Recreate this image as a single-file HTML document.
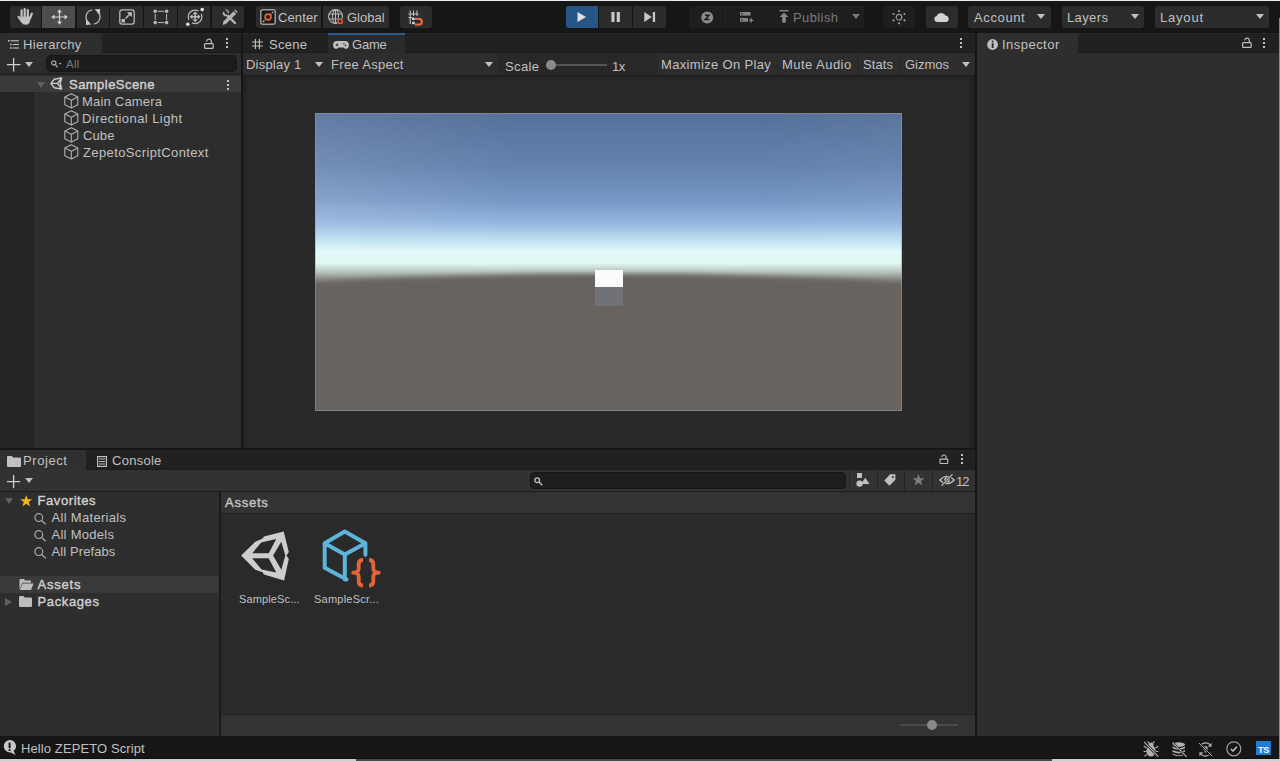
<!DOCTYPE html>
<html><head><meta charset="utf-8">
<style>
*{box-sizing:border-box;margin:0;padding:0}
html,body{width:1280px;height:761px;overflow:hidden;background:#161616;font-family:"Liberation Sans",sans-serif;color:#c0c0c0;font-size:13px}
.a{position:absolute}
.b{position:absolute;background:#2c2c2c;top:6px;height:22px}
.t{position:absolute;white-space:nowrap;line-height:1;font-size:13px}
.bd{font-weight:bold}
.sb{-webkit-text-stroke:0.4px currentColor}
svg{position:absolute;overflow:visible}
.dd{position:absolute;width:0;height:0;border-left:4px solid transparent;border-right:4px solid transparent;border-top:5px solid #c0c0c0}
.kb{position:absolute;width:2px;height:10px;background:radial-gradient(circle at 1px 1px,#c0c0c0 1px,transparent 1.2px) 0 0/2px 4px repeat-y}
</style></head><body>

<!-- ============ MAIN TOOLBAR ============ -->
<div class="a" style="left:0;top:0;width:1280px;height:1px;background:#ececec"></div>

<div class="b" style="left:10px;width:31px;border-radius:3px 0 0 3px"></div>
<div class="b" style="left:42px;width:33px;background:#4d4d4d"></div>
<div class="b" style="left:77px;width:32px"></div>
<div class="b" style="left:110px;width:33px"></div>
<div class="b" style="left:144px;width:33px"></div>
<div class="b" style="left:178px;width:32px"></div>
<div class="b" style="left:212px;width:32px;border-radius:0 3px 3px 0"></div>

<div class="b" style="left:256px;width:65px;border-radius:3px 0 0 3px"></div>
<div class="b" style="left:323px;width:66px;border-radius:0 3px 3px 0"></div>
<div class="t" style="left:278px;top:11px;letter-spacing:0.12px">Center</div>
<div class="t" style="left:347px;top:11px">Global</div>
<div class="b" style="left:400px;width:32px;border-radius:3px"></div>

<div class="b" style="left:566px;width:32px;background:#265586;border-radius:3px 0 0 3px"></div>
<div class="b" style="left:599px;width:33px"></div>
<div class="b" style="left:633px;width:33px;border-radius:0 3px 3px 0"></div>

<div class="b" style="left:689px;width:175px;background:#1e1e1e;border-radius:3px"></div>
<div class="a" style="left:725px;top:9px;width:1px;height:16px;background:#252525"></div>
<div class="t" style="left:793px;top:11px;letter-spacing:0.4px;color:#7a7a7a">Publish</div>
<div class="dd" style="left:852px;top:14px;border-top-color:#7a7a7a"></div>

<div class="b" style="left:883px;width:32px;background:#1e1e1e;border-radius:3px"></div>
<div class="b" style="left:926px;width:32px;border-radius:3px"></div>

<div class="b" style="left:968px;width:83px;border-radius:3px"></div>
<div class="t" style="left:974px;top:11px;letter-spacing:0.62px">Account</div>
<div class="dd" style="left:1037px;top:14px"></div>
<div class="b" style="left:1062px;width:82px;border-radius:3px"></div>
<div class="t" style="left:1067px;top:11px;letter-spacing:0.38px">Layers</div>
<div class="dd" style="left:1131px;top:14px"></div>
<div class="b" style="left:1155px;width:114px;border-radius:3px"></div>
<div class="t" style="left:1160px;top:11px;letter-spacing:0.8px">Layout</div>
<div class="dd" style="left:1256px;top:14px"></div>
<div class="a" style="left:1279px;top:18px;width:1px;height:743px;background:#8a8a8a"></div>

<!-- ============ HIERARCHY ============ -->
<div class="a" style="left:0;top:33px;width:241px;height:20px;background:#212121;border-top:1px solid #272727;border-bottom:1px solid #1b1b1b"></div>
<div class="a" style="left:0;top:33px;width:102px;height:20px;background:#2d2d2d;border-radius:3px 3px 0 0"></div>
<div class="t" style="left:23px;top:38px;letter-spacing:0.33px">Hierarchy</div>
<div class="a" style="left:0;top:53px;width:241px;height:395px;background:#2d2d2d"></div>
<div class="a" style="left:46px;top:55px;width:191px;height:17px;background:#1c1c1c;border-radius:5px;border:1px solid #161616"></div>
<div class="t" style="left:66px;top:58.5px;font-size:11.5px;color:#7a7a7a;letter-spacing:0.24px">All</div>
<div class="a" style="left:0;top:73px;width:241px;height:2px;background:#212121"></div>
<div class="a" style="left:0;top:76px;width:241px;height:16px;background:#3a3a3a"></div>
<div class="a" style="left:0;top:92px;width:34px;height:356px;background:#242424;border-right:1px solid #202020"></div>
<div class="t sb" style="left:69px;top:77.5px;letter-spacing:0.46px;color:#d0d0d0">SampleScene</div>
<div class="t" style="left:82px;top:94.5px;letter-spacing:0.2px">Main Camera</div>
<div class="t" style="left:82px;top:111.5px;letter-spacing:0.43px">Directional Light</div>
<div class="t" style="left:83px;top:128.5px;letter-spacing:0.12px">Cube</div>
<div class="t" style="left:83px;top:145.5px;letter-spacing:0.38px">ZepetoScriptContext</div>

<!-- ============ SCENE / GAME ============ -->
<div class="a" style="left:243px;top:33px;width:732px;height:20px;background:#212121;border-top:1px solid #272727;border-bottom:1px solid #1b1b1b"></div>
<div class="a" style="left:328px;top:33px;width:77px;height:20px;background:#2b2b2b;border-radius:3px 3px 0 0"></div>
<div class="a" style="left:328px;top:33px;width:77px;height:2px;background:#2b5b8c"></div>
<div class="t" style="left:269px;top:37.5px;letter-spacing:0.29px">Scene</div>
<div class="t" style="left:352px;top:37.5px;letter-spacing:-0.22px">Game</div>
<div class="a" style="left:243px;top:53px;width:732px;height:22px;background:#282828"></div>
<div class="a" style="left:243px;top:53px;width:84px;height:22px;background:#2d2d2d"></div>
<div class="a" style="left:328px;top:53px;width:170px;height:22px;background:#2d2d2d"></div>
<div class="a" style="left:658px;top:53px;width:119px;height:22px;background:#2d2d2d"></div>
<div class="a" style="left:778px;top:53px;width:79px;height:22px;background:#2d2d2d"></div>
<div class="a" style="left:859px;top:53px;width:40px;height:22px;background:#2d2d2d"></div>
<div class="a" style="left:900px;top:53px;width:74px;height:22px;background:#2d2d2d"></div>
<div class="t" style="left:246px;top:58px;letter-spacing:0.21px">Display 1</div>
<div class="dd" style="left:315px;top:62px"></div>
<div class="t" style="left:331px;top:58px;letter-spacing:0.31px">Free Aspect</div>
<div class="dd" style="left:485px;top:62px"></div>
<div class="t" style="left:505px;top:59.5px;letter-spacing:0.38px">Scale</div>
<div class="a" style="left:551px;top:64px;width:56px;height:2px;background:#555"></div>
<div class="a" style="left:546px;top:60px;width:10px;height:10px;border-radius:50%;background:#8a8a8a"></div>
<div class="t" style="left:612px;top:59.5px;letter-spacing:-0.5px">1x</div>
<div class="t" style="left:661px;top:58px;letter-spacing:0.33px">Maximize On Play</div>
<div class="t" style="left:782px;top:58px;letter-spacing:0.46px">Mute Audio</div>
<div class="t" style="left:863px;top:58px;letter-spacing:0.12px">Stats</div>
<div class="t" style="left:905px;top:58px">Gizmos</div>
<div class="dd" style="left:962px;top:62px"></div>
<div class="a" style="left:243px;top:75px;width:732px;height:373px;background:#292929;border-top:1px solid #1e1e1e"></div>
<div class="a" style="left:243px;top:76px;width:732px;height:4px;background:linear-gradient(#222,#292929)"></div>
<div class="a" style="left:243px;top:75px;width:5px;height:373px;background:linear-gradient(90deg,#1f1f1f,rgba(41,41,41,0))"></div>
<div class="a" style="left:968px;top:75px;width:7px;height:373px;background:linear-gradient(90deg,rgba(41,41,41,0),#1c1c1c)"></div>

<!-- game view -->
<svg style="left:315px;top:113px;overflow:hidden" width="587" height="298" viewBox="0 0 587 298">
  <defs>
    <linearGradient id="sky" x1="0" y1="0" x2="0" y2="298" gradientUnits="userSpaceOnUse">
      <stop offset="0" stop-color="#55709a"/>
      <stop offset="0.178" stop-color="#6482ae"/>
      <stop offset="0.292" stop-color="#7697c5"/>
      <stop offset="0.369" stop-color="#94b6df"/>
      <stop offset="0.423" stop-color="#bddff0"/>
      <stop offset="0.465" stop-color="#e2fafa"/>
      <stop offset="0.505" stop-color="#e0f6f2"/>
      <stop offset="0.53" stop-color="#bccac5"/>
      <stop offset="0.555" stop-color="#8f928e"/>
      <stop offset="0.6" stop-color="#6a645f"/>
      <stop offset="1" stop-color="#67605b"/>
    </linearGradient>
    <linearGradient id="hl" x1="0" y1="0" x2="587" y2="0" gradientUnits="userSpaceOnUse">
      <stop offset="0" stop-color="#fff" stop-opacity="0.13"/>
      <stop offset="0.35" stop-color="#fff" stop-opacity="0"/>
      <stop offset="0.75" stop-color="#fff" stop-opacity="0"/>
      <stop offset="1" stop-color="#fff" stop-opacity="0.05"/>
    </linearGradient>
    <linearGradient id="vm" x1="0" y1="0" x2="0" y2="160" gradientUnits="userSpaceOnUse">
      <stop offset="0" stop-color="#fff" stop-opacity="0.6"/>
      <stop offset="0.6" stop-color="#fff" stop-opacity="1"/>
      <stop offset="1" stop-color="#fff" stop-opacity="0"/>
    </linearGradient>
    <mask id="m1"><rect width="587" height="160" fill="url(#vm)"/></mask>
    <filter id="bl" x="-5%" y="-20%" width="110%" height="140%"><feGaussianBlur stdDeviation="2.4"/></filter>
    <filter id="bl2"><feGaussianBlur stdDeviation="0.6"/></filter>
  </defs>
  <rect width="587" height="298" fill="url(#sky)"/>
  <rect width="587" height="160" fill="url(#hl)" mask="url(#m1)"/>
  <path d="M-20 170 Q293 152 607 170 L607 320 L-20 320 Z" fill="#69635e" filter="url(#bl)"/>
  <g filter="url(#bl2)">
  <rect x="280" y="157" width="28" height="17" fill="#fbfbfb"/>
  <rect x="280" y="174" width="28" height="19" fill="#6f7278"/>
  </g>
  <rect x="0.5" y="0.5" width="586" height="297" fill="none" stroke="#9aa0a8" stroke-opacity="0.5"/>
</svg>

<!-- ============ INSPECTOR ============ -->
<div class="a" style="left:977px;top:33px;width:302px;height:20px;background:#212121;border-top:1px solid #272727;border-bottom:1px solid #1b1b1b"></div>
<div class="a" style="left:977px;top:33px;width:101px;height:20px;background:#2e2e2e;border-radius:3px 3px 0 0"></div>
<div class="t" style="left:1002px;top:37.5px;letter-spacing:0.47px">Inspector</div>
<div class="a" style="left:977px;top:53px;width:302px;height:683px;background:#2e2e2e"></div>

<!-- ============ PROJECT ============ -->
<div class="a" style="left:0;top:450px;width:975px;height:20px;background:#212121;border-top:1px solid #272727;border-bottom:1px solid #1b1b1b"></div>
<div class="a" style="left:0;top:450px;width:86px;height:20px;background:#303030;border-radius:3px 3px 0 0"></div>
<div class="t" style="left:23px;top:453.7px;letter-spacing:0.58px">Project</div>
<div class="t" style="left:112px;top:453.7px;letter-spacing:0.26px">Console</div>
<div class="a" style="left:0;top:470px;width:975px;height:21px;background:#323232"></div>
<div class="a" style="left:530px;top:472px;width:316px;height:17px;background:#1e1e1e;border-radius:4px;border:1px solid #161616"></div>
<div class="a" style="left:849px;top:470px;width:1px;height:21px;background:#252525"></div>
<div class="a" style="left:877px;top:470px;width:1px;height:21px;background:#252525"></div>
<div class="a" style="left:904px;top:470px;width:1px;height:21px;background:#252525"></div>
<div class="a" style="left:932px;top:470px;width:1px;height:21px;background:#252525"></div>
<div class="t" style="left:956px;top:474.5px;letter-spacing:-1px">12</div>
<div class="a" style="left:0;top:491px;width:975px;height:1px;background:#1c1c1c"></div>
<div class="a" style="left:0;top:492px;width:219px;height:244px;background:#2e2e2e"></div>
<div class="a" style="left:219px;top:492px;width:2px;height:244px;background:#1c1c1c;border-left:1px solid #181818"></div>
<div class="a" style="left:221px;top:492px;width:754px;height:244px;background:#2a2a2a"></div>
<div class="t sb" style="left:37.5px;top:494px;letter-spacing:0.58px;color:#d0d0d0">Favorites</div>
<div class="t" style="left:51.5px;top:510.7px;letter-spacing:0.31px">All Materials</div>
<div class="t" style="left:51.5px;top:527.7px;letter-spacing:0.27px">All Models</div>
<div class="t" style="left:51.5px;top:544.6px;letter-spacing:0.1px">All Prefabs</div>
<div class="a" style="left:0;top:576px;width:219px;height:17px;background:#3a3a3a"></div>
<div class="t sb" style="left:37.5px;top:577.5px;letter-spacing:0.78px;color:#d0d0d0">Assets</div>
<div class="t sb" style="left:37.5px;top:594.5px;letter-spacing:0.62px;color:#d0d0d0">Packages</div>
<div class="a" style="left:221px;top:492px;width:754px;height:21px;background:#333333"></div>
<div class="a" style="left:221px;top:513px;width:754px;height:1px;background:#222"></div>
<div class="t sb" style="left:225px;top:496.3px;letter-spacing:0.76px;color:#c4c4c4">Assets</div>
<div class="t" style="left:239px;top:594.4px;font-size:11px;letter-spacing:0.13px">SampleSc...</div>
<div class="t" style="left:314px;top:594.4px;font-size:11px;letter-spacing:0.23px">SampleScr...</div>
<div class="a" style="left:221px;top:714px;width:754px;height:1px;background:#222"></div>
<div class="a" style="left:221px;top:715px;width:754px;height:21px;background:#333333"></div>
<div class="a" style="left:900px;top:724px;width:58px;height:2px;background:#4a4a4a"></div>
<div class="a" style="left:927px;top:720px;width:10px;height:10px;border-radius:50%;background:#8a8a8a"></div>

<!-- ============ STATUS BAR ============ -->
<div class="a" style="left:0;top:736px;width:1279px;height:23px;background:#161616;border-bottom:1px solid #0e0e0e"></div>
<div class="a" style="left:0;top:759px;width:356px;height:2px;background:#cfcfcf"></div>
<div class="a" style="left:356px;top:759px;width:696px;height:2px;background:#4a4a4a"></div>
<div class="a" style="left:1052px;top:759px;width:228px;height:2px;background:#cfcfcf"></div>
<div class="t" style="left:21px;top:742px;letter-spacing:0.1px">Hello ZEPETO Script</div>
<div class="a" style="left:1256px;top:741px;width:15px;height:14px;background:#1f7bd3"></div>
<div class="t bd" style="left:1258px;top:746px;font-size:9px;color:#fff;letter-spacing:-0.2px">TS</div>

<!-- ============ TOOLBAR ICONS ============ -->
<svg style="left:17px;top:8px" width="17" height="17" viewBox="0 0 17 17" fill="#c2c2c2" stroke="#c2c2c2" stroke-linecap="round">
  <path d="M3.6 8.5 L13.8 8.8 L12.6 14.2 Q11.6 16.8 8.6 16.8 Q5.6 16.8 4.6 14.4 Z" stroke="none"/>
  <path d="M4.6 9.5 V2.4 M7.7 9 V1.2 M10.8 9.5 V2 M12.9 10.5 L14.8 5.6" stroke-width="2.2" fill="none"/>
  <path d="M5 13.5 L1.6 8.8" stroke-width="2.2" fill="none"/>
</svg>
<svg style="left:51px;top:9px" width="17" height="16" viewBox="0 0 17 16" fill="#d4d4d4" stroke="#d4d4d4">
  <path d="M8.5 0.3 L11 3.4 H6 Z M8.5 15.7 L11 12.6 H6 Z M0.3 8 L3.4 5.5 V10.5 Z M16.7 8 L13.6 5.5 V10.5 Z" stroke="none"/>
  <path d="M8.5 3 V13 M3 8 H14" stroke-width="1.1" fill="none"/>
</svg>
<svg style="left:85px;top:9px" width="16" height="16" viewBox="0 0 16 16" fill="none" stroke="#c2c2c2" stroke-width="1.2">
  <path d="M7.2 1 A7 7 0 0 0 3.4 13.2"/>
  <path d="M8.8 15 A7 7 0 0 0 12.6 2.8"/>
  <path d="M1.2 10.6 L6.4 15.6 L0.8 16 Z M14.8 5.4 L9.6 0.4 L15.2 0 Z" fill="#c8c8c8" stroke="none"/>
</svg>
<svg style="left:119px;top:9px" width="16" height="16" viewBox="0 0 16 16" fill="none" stroke="#b8b8b8">
  <rect x="0.8" y="0.8" width="14.4" height="14.4" rx="2.4" stroke-width="1.3"/>
  <rect x="2.5" y="10" width="3.5" height="3.5" fill="#b8b8b8" stroke="none"/>
  <path d="M6.5 9.5 L11.5 4.5" stroke-width="1.6"/>
  <path d="M8 3.2 H12.8 V8 Z" fill="#c8c8c8" stroke="none"/>
</svg>
<svg style="left:153px;top:9px" width="16" height="16" viewBox="0 0 16 16" fill="#b8b8b8" stroke="#b8b8b8">
  <circle cx="2.2" cy="2.3" r="1.8" stroke="none"/><circle cx="13.6" cy="2.3" r="1.8" stroke="none"/>
  <circle cx="2.2" cy="13.6" r="1.8" stroke="none"/><circle cx="13.6" cy="13.6" r="1.8" stroke="none"/>
  <path d="M4.8 2.3 H11 M4.8 13.6 H11 M2.2 4.8 V11.1 M13.6 4.8 V11.1" stroke-width="1" fill="none"/>
</svg>
<svg style="left:186px;top:8px" width="18" height="18" viewBox="0 0 18 18" fill="#bdbdbd" stroke="#bdbdbd">
  <circle cx="9.1" cy="8.85" r="6.8" fill="none" stroke-width="1.2" stroke-dasharray="14 4 17.4 4 3.3 0"/>
  <path d="M9.1 3.4 L11.6 6.3 H6.6 Z M9.1 14.3 L11.6 11.4 H6.6 Z M3.6 8.85 L6.5 6.35 V11.35 Z M14.6 8.85 L11.7 6.35 V11.35 Z" stroke="none"/>
  <path d="M9.1 6 V11.7 M6.3 8.85 H11.9" stroke-width="1.5"/>
  <circle cx="16.2" cy="1.6" r="1.8" fill="#e0e0e0" stroke="none"/><circle cx="1.8" cy="16.3" r="1.8" fill="#e0e0e0" stroke="none"/>
</svg>
<svg style="left:222px;top:9px" width="16" height="16" viewBox="0 0 16 16" fill="#b4b4b4" stroke="none">
  <path d="M0.6 16 L1.6 12.2 L11.6 2.2 L14.2 4.8 L4.2 14.8 Z"/>
  <path d="M12.3 1.5 L13.3 0.5 L15.7 2.9 L14.7 3.9 Z"/>
  <path d="M6.2 5.6 L14.6 14 L12.8 15.6 L4.6 7.4 Z"/>
  <path d="M1 2.8 A3.3 3.3 0 0 0 6 6.8 L4.6 5.4 A1.6 1.6 0 0 1 2.6 3.3 Z M3 0.6 A3.3 3.3 0 0 1 7 4.8 L5.5 3.6 A1.6 1.6 0 0 0 4.2 1.8 Z"/>
</svg>
<svg style="left:260px;top:9px" width="16" height="16" viewBox="0 0 16 16">
  <rect x="0.8" y="0.8" width="14.4" height="14.4" rx="2" fill="#1a1a1a" stroke="#9a9a9a" stroke-width="1.5"/>
  <path d="M3 13 L13 3" stroke="#d8d8d8" stroke-width="1.2" stroke-dasharray="2 1.2"/>
  <circle cx="8" cy="8" r="2.9" fill="#2a1a16" stroke="#e3643e" stroke-width="1.7"/>
</svg>
<svg style="left:328px;top:9px" width="16" height="16" viewBox="0 0 16 16" fill="none" stroke="#b8b8b8" stroke-width="1.1">
  <circle cx="7.5" cy="7.5" r="6.9"/>
  <ellipse cx="7.5" cy="7.5" rx="3" ry="6.9"/>
  <path d="M0.8 5 H14.2 M0.8 10 H14.2 M7.5 0.6 V14.4"/>
  <circle cx="12.2" cy="12.4" r="3.2" fill="#191919" stroke="none"/>
  <circle cx="12.2" cy="12.4" r="2.2" fill="#2c2c2c" stroke="#e0603a" stroke-width="1.5"/>
</svg>
<svg style="left:408px;top:10px" width="16" height="15" viewBox="0 0 16 15">
  <path d="M0.5 4 H10.5 M0.5 7.5 H4 M2.2 0.5 V14 M5.5 0.5 V6 M9 0.5 V6" stroke="#c2c2c2" stroke-width="1.1"/>
  <rect x="4.2" y="7.6" width="2.4" height="2.4" fill="#e8e8e8"/><rect x="4.2" y="11.8" width="2.4" height="2.4" fill="#e8e8e8"/>
  <path d="M7 8.8 H11 A2.9 2.9 0 0 1 11 14.6 H7" fill="none" stroke="#e0663c" stroke-width="2.3"/>
</svg>

<svg style="left:577px;top:12px" width="10" height="10" viewBox="0 0 10 10"><path d="M0.5 0 L9 5 L0.5 10 Z" fill="#e2e2e2"/></svg>
<svg style="left:611px;top:12px" width="10" height="10" viewBox="0 0 10 10"><path d="M0.4 0 H3.5 V10 H0.4 Z M5.7 0 H8.9 V10 H5.7 Z" fill="#c8c8c8"/></svg>
<svg style="left:644px;top:12px" width="12" height="10" viewBox="0 0 12 10"><path d="M0.3 0 L7.8 5 L0.3 10 Z M8.8 0 H11.1 V10 H8.8 Z" fill="#c8c8c8"/></svg>

<svg style="left:701px;top:10.5px" width="13" height="13" viewBox="0 0 13 13"><circle cx="6.2" cy="6.4" r="6" fill="#8a8a8a"/><path d="M4 4.3 H8 L4.2 8.5 H8.4" stroke="#1e1e1e" stroke-width="1.5" fill="none"/></svg>
<svg style="left:740px;top:12px" width="14" height="11" viewBox="0 0 14 11" fill="#858585"><rect x="0" y="0" width="10.5" height="3.6"/><rect x="0" y="6" width="8" height="3.8"/><rect x="1.3" y="1.2" width="1.4" height="1.2" fill="#1e1e1e"/><rect x="1.3" y="7.3" width="1.4" height="1.2" fill="#1e1e1e"/><path d="M11.2 6.2 V10.6 M9 8.4 H13.4" stroke="#858585" stroke-width="1.4"/></svg>
<svg style="left:779px;top:10px" width="10" height="13" viewBox="0 0 10 13" fill="#858585"><rect x="0.5" y="0" width="9" height="1.4"/><path d="M5 2.6 L9.5 7 H6.8 V12.8 H3.2 V7 H0.5 Z"/></svg>

<svg style="left:891.5px;top:10px" width="14" height="15" viewBox="0 0 14 15" fill="#9a9a9a"><circle cx="7" cy="7.2" r="2.8" fill="none" stroke="#9a9a9a" stroke-width="1.2"/><circle cx="7" cy="1.1" r="1.1"/><circle cx="7" cy="13.3" r="1.1"/><circle cx="1.5" cy="4" r="1.1"/><circle cx="12.5" cy="4" r="1.1"/><circle cx="1.5" cy="10.4" r="1.1"/><circle cx="12.5" cy="10.4" r="1.1"/></svg>
<svg style="left:934px;top:12px" width="16" height="10" viewBox="0 0 16 10"><path d="M3 10 A3 3 0 0 1 2.6 4.1 A5 5 0 0 1 11.6 3.6 A3.3 3.3 0 0 1 12.5 10 Z" fill="#d2d2d2"/></svg>

<!-- ============ PANEL ICONS ============ -->
<svg style="left:8px;top:39.5px" width="11" height="9" viewBox="0 0 11 9" fill="#bcbcbc"><rect x="0" y="0" width="1.6" height="1.6"/><rect x="2.6" y="0.2" width="8.4" height="1.2"/><rect x="2" y="3.7" width="1.6" height="1.6"/><rect x="4.6" y="3.9" width="6.4" height="1.2"/><rect x="2" y="7.2" width="1.6" height="1.6"/><rect x="4.6" y="7.4" width="6.4" height="1.2"/></svg>
<svg style="left:204px;top:37.5px" width="10" height="11" viewBox="0 0 10 11" fill="none" stroke="#c0c0c0" stroke-width="1.2"><path d="M2.6 3.4 A2.4 2.4 0 0 1 7.3 2.8 V5.4"/><rect x="0.6" y="5.6" width="8.6" height="4.8" rx="0.9"/></svg>
<div class="kb" style="left:226px;top:38px"></div>
<svg style="left:7px;top:58px" width="14" height="14" viewBox="0 0 14 14" stroke="#cfcfcf" stroke-width="1.3"><path d="M6.6 0 V13.4 M0 6.7 H13.4"/></svg>
<div class="dd" style="left:24.5px;top:61.5px"></div>
<svg style="left:50.5px;top:60px" width="11" height="8" viewBox="0 0 11 8" fill="none" stroke="#a8a8a8" stroke-width="1.3"><circle cx="2.8" cy="2.9" r="2.1"/><path d="M4.3 4.5 L6.6 7.3 M8 3.6 H10.2"/></svg>
<div class="dd" style="left:36.5px;top:81.5px;border-top-color:#5f5f5f;border-top-width:6px"></div>
<svg style="left:49.5px;top:77px" width="13" height="13" viewBox="0 0 13 13" fill="none" stroke="#cdcdcd" stroke-width="1.4" stroke-linejoin="round"><path d="M11.6 0.9 L4.3 2.2 L0.9 6.4 L4.3 10.7 L11.6 12.1 L10.2 6.4 Z M0.9 6.4 H7.5 L11.6 0.9 M7.5 6.4 L11.6 12.1"/></svg>
<div class="kb" style="left:227px;top:79.5px"></div>
<svg style="left:64px;top:93px" width="15" height="16" viewBox="0 0 15 16" fill="none" stroke="#b0b0b0" stroke-width="1.1" stroke-linejoin="round"><path d="M7.3 0.8 L13.8 4 V11.8 L7.3 15 L0.8 11.8 V4 Z M0.8 4 L7.3 7.2 L13.8 4 M7.3 7.2 V15"/></svg>
<svg style="left:64px;top:110px" width="15" height="16" viewBox="0 0 15 16" fill="none" stroke="#b0b0b0" stroke-width="1.1" stroke-linejoin="round"><path d="M7.3 0.8 L13.8 4 V11.8 L7.3 15 L0.8 11.8 V4 Z M0.8 4 L7.3 7.2 L13.8 4 M7.3 7.2 V15"/></svg>
<svg style="left:64px;top:127px" width="15" height="16" viewBox="0 0 15 16" fill="none" stroke="#b0b0b0" stroke-width="1.1" stroke-linejoin="round"><path d="M7.3 0.8 L13.8 4 V11.8 L7.3 15 L0.8 11.8 V4 Z M0.8 4 L7.3 7.2 L13.8 4 M7.3 7.2 V15"/></svg>
<svg style="left:64px;top:144px" width="15" height="16" viewBox="0 0 15 16" fill="none" stroke="#b0b0b0" stroke-width="1.1" stroke-linejoin="round"><path d="M7.3 0.8 L13.8 4 V11.8 L7.3 15 L0.8 11.8 V4 Z M0.8 4 L7.3 7.2 L13.8 4 M7.3 7.2 V15"/></svg>

<svg style="left:252px;top:38.5px" width="11" height="10" viewBox="0 0 11 10" stroke="#bcbcbc" stroke-width="1.2"><path d="M3.4 0 V10 M7.4 0 V10 M0 3 H11 M0 7 H11"/></svg>
<svg style="left:333px;top:40.5px" width="16" height="8" viewBox="0 0 16 8"><path d="M4 0 H12 A3.9 3.9 0 0 1 12 7.8 L10.5 6.6 H5.5 L4 7.8 A3.9 3.9 0 0 1 4 0 Z" fill="#c0c0c0"/><path d="M2.6 3.9 H5.4 M4 2.5 V5.3" stroke="#2a2a2a" stroke-width="1"/><circle cx="11" cy="2.8" r="0.8" fill="#2a2a2a"/><circle cx="12.6" cy="4.6" r="0.8" fill="#2a2a2a"/></svg>
<div class="kb" style="left:960px;top:38px"></div>

<svg style="left:987px;top:38.5px" width="12" height="11" viewBox="0 0 12 11"><circle cx="5.6" cy="5.5" r="5.4" fill="#c0c0c0"/><rect x="4.7" y="4.2" width="1.9" height="4.8" fill="#2c2c2c"/><circle cx="5.65" cy="2.6" r="1" fill="#2c2c2c"/></svg>
<svg style="left:1241.5px;top:37px" width="10" height="11" viewBox="0 0 10 11" fill="none" stroke="#c0c0c0" stroke-width="1.2"><path d="M2.6 3.4 A2.4 2.4 0 0 1 7.3 2.8 V5.4"/><rect x="0.6" y="5.6" width="8.6" height="4.8" rx="0.9"/></svg>
<div class="kb" style="left:1263px;top:38px"></div>

<svg style="left:7px;top:455.5px" width="14" height="11" viewBox="0 0 14 11"><path d="M0 1 Q0 0 1 0 H4.8 L6.2 1.6 H13 Q14 1.6 14 2.6 V10.2 Q14 11 13 11 H1 Q0 11 0 10 Z" fill="#c0c0c0"/></svg>
<svg style="left:97px;top:455.5px" width="10" height="11" viewBox="0 0 10 11"><rect x="0.6" y="0.6" width="8.8" height="9.8" fill="none" stroke="#c0c0c0" stroke-width="1.2"/><path d="M2 3 H8 M2 5.5 H8 M2 8 H8" stroke="#c0c0c0" stroke-width="1.2"/></svg>
<svg style="left:939px;top:454px" width="10" height="10" viewBox="0 0 10 11" fill="none" stroke="#c0c0c0" stroke-width="1.2"><path d="M2.6 3.4 A2.4 2.4 0 0 1 7.3 2.8 V5.4"/><rect x="0.6" y="5.6" width="8.6" height="4.8" rx="0.9"/></svg>
<div class="kb" style="left:960.5px;top:454px"></div>
<svg style="left:7px;top:475px" width="14" height="14" viewBox="0 0 14 14" stroke="#cfcfcf" stroke-width="1.3"><path d="M6.6 0 V13.2 M0 6.6 H13.2"/></svg>
<div class="dd" style="left:24.5px;top:478px"></div>
<svg style="left:534px;top:476.5px" width="9" height="9" viewBox="0 0 9 9" fill="none" stroke="#c4c4c4" stroke-width="1.3"><circle cx="3.2" cy="3.2" r="2.4"/><path d="M5 5 L8.2 8.2"/></svg>
<svg style="left:856px;top:472.5px" width="14" height="14" viewBox="0 0 14 14" fill="#c0c0c0"><rect x="1" y="0" width="5" height="5"/><circle cx="3.6" cy="10.6" r="3.2"/><path d="M9.2 4.8 L13.5 11 H5 Z"/></svg>
<svg style="left:884px;top:474px" width="12" height="12" viewBox="0 0 12 12"><path d="M6 0.3 H11.4 V5.7 L5.4 11.7 L0.3 6.6 Z" fill="#c0c0c0"/><circle cx="8.9" cy="2.9" r="1" fill="#2e2e2e"/></svg>
<svg style="left:911.5px;top:474px" width="13" height="12" viewBox="0 0 24 23"><path d="M12 0 L15 8 L23.6 8.3 L16.8 13.6 L19.3 22 L12 17 L4.7 22 L7.2 13.6 L0.4 8.3 L9 8 Z" fill="#7c7c7c"/></svg>
<svg style="left:939px;top:473.5px" width="16" height="12" viewBox="0 0 16 12" fill="none" stroke="#c0c0c0" stroke-width="1.2"><path d="M0.8 6 Q8 -1.5 15.2 6 Q8 13.5 0.8 6 Z"/><circle cx="8" cy="6" r="2.2" fill="#c0c0c0"/><path d="M2.5 11.8 L13.5 0.2" stroke="#2e2e2e" stroke-width="2.4"/><path d="M2.5 11.8 L13.5 0.2"/></svg>

<div class="dd" style="left:4.5px;top:497.5px;border-top-color:#606060;border-left-width:4.2px;border-right-width:4.2px;border-top-width:6.5px"></div>
<svg style="left:19.5px;top:494.5px" width="12.5" height="12" viewBox="0 0 24 23"><path d="M12 0 L15 8 L23.6 8.3 L16.8 13.6 L19.3 22 L12 17 L4.7 22 L7.2 13.6 L0.4 8.3 L9 8 Z" fill="#f0b41c"/></svg>
<svg style="left:33.5px;top:512.5px" width="13" height="12" viewBox="0 0 13 12" fill="none" stroke="#a8a8a8" stroke-width="1.2"><circle cx="4.8" cy="4.6" r="3.9"/><path d="M7.7 7.5 L11.6 11.2"/></svg>
<svg style="left:33.5px;top:529.5px" width="13" height="12" viewBox="0 0 13 12" fill="none" stroke="#a8a8a8" stroke-width="1.2"><circle cx="4.8" cy="4.6" r="3.9"/><path d="M7.7 7.5 L11.6 11.2"/></svg>
<svg style="left:33.5px;top:546.5px" width="13" height="12" viewBox="0 0 13 12" fill="none" stroke="#a8a8a8" stroke-width="1.2"><circle cx="4.8" cy="4.6" r="3.9"/><path d="M7.7 7.5 L11.6 11.2"/></svg>
<svg style="left:18.5px;top:579px" width="15" height="11" viewBox="0 0 15 11"><path d="M0.5 1 Q0.5 0 1.5 0 H5 L6.2 1.5 H12 V3.8 H3.5 L0.5 10.5 Z" fill="#bdbdbd"/><path d="M3.8 4.6 H14.6 L12 11 H0.8 Z" fill="#bdbdbd"/></svg>
<svg style="left:5px;top:598px" width="7" height="8" viewBox="0 0 7 8"><path d="M0 0 L7 4 L0 8 Z" fill="#606060"/></svg>
<svg style="left:19px;top:596px" width="13" height="11" viewBox="0 0 13 11"><path d="M0 1 Q0 0 1 0 H4.4 L5.8 1.6 H12 Q13 1.6 13 2.6 V10 Q13 11 12 11 H1 Q0 11 0 10 Z" fill="#bdbdbd"/></svg>

<!-- asset icons -->
<svg style="left:236px;top:526px" width="60" height="60" viewBox="0 0 60 60">
  <path fill-rule="evenodd" fill="#cdcdcd" d="M47.7 5.5 L52.8 26 L50.5 29.6 L52.8 33.1 L48.1 54.4 L28 48.5 L26.6 46.3 L19.3 43.8 L5.1 29.6 L19.3 15.8 L26.6 12.6 L28 10.6 Z
   M16.2 27.2 L25.2 16.6 L40.2 13 L32.7 27.2 Z
   M16.2 32.3 L32.7 32.3 L40.2 46.5 L25.6 43.4 Z
   M45.3 15.8 L37.1 29.6 L45.3 43.8 L49.3 29.6 Z"/>
</svg>
<svg style="left:318px;top:524px" width="68" height="68" viewBox="0 0 68 68">
  <path d="M47.4 30.8 V19.2 L26.8 7.6 L6.7 19.2 L26.8 30.4 L47.4 19.2 M6.7 19.2 V43.8 L28.6 55.4 M26.8 30.4 V55.4" fill="none" stroke="#5cb4dc" stroke-width="4" stroke-linejoin="round" stroke-linecap="round"/>
  <path d="M45 36 Q40.7 36 40.7 40 V44.5 Q40.7 48.7 35.2 48.7 Q40.7 48.7 40.7 53 V57.5 Q40.7 61.5 45 61.5 M51 36 Q55.3 36 55.3 40 V44.5 Q55.3 48.7 60.8 48.7 Q55.3 48.7 55.3 53 V57.5 Q55.3 61.5 51 61.5" fill="none" stroke="#e4643a" stroke-width="3.8" stroke-linecap="butt" stroke-linejoin="round"/>
</svg>

<!-- status icons -->
<svg style="left:3px;top:739.5px" width="14" height="16" viewBox="0 0 14 16"><path d="M6.5 0 A6.4 6.2 0 0 1 10.6 11 L12.6 14.9 L7.8 12.4 A6.4 6.2 0 1 1 6.5 0 Z" fill="#c8c8c8"/><rect x="5.6" y="2.6" width="2" height="5.6" fill="#181818"/><rect x="5.6" y="9.2" width="2" height="1.8" fill="#181818"/></svg>
<svg style="left:1142.5px;top:741px" width="16" height="16" viewBox="0 0 16 16" fill="#b0b0b0"><ellipse cx="8" cy="10" rx="4.6" ry="5.6"/><circle cx="8" cy="4" r="2.6"/><path d="M3.5 7 L0.8 5.2 M3.5 10.5 L0.6 10.5 M3.8 13.4 L1.5 15.2 M12.5 7 L15.2 5.2 M12.5 10.5 L15.4 10.5 M12.2 13.4 L14.5 15.2 M6 2.2 L4.6 0.4 M10 2.2 L11.4 0.4" stroke="#b0b0b0" stroke-width="1.2"/><path d="M1 0.8 L15.5 15.6" stroke="#181818" stroke-width="2.4"/><path d="M1 0.8 L15.5 15.6" stroke="#b0b0b0" stroke-width="1.1"/></svg>
<svg style="left:1171.5px;top:741.5px" width="15" height="15" viewBox="0 0 15 15" fill="#b0b0b0"><ellipse cx="6.8" cy="2.6" rx="6.2" ry="2.4"/><path d="M0.6 4.4 Q6.8 8 13 4.4 V6.2 Q6.8 9.8 0.6 6.2 Z M0.6 8 Q6.8 11.6 13 8 V9.8 Q6.8 13.4 0.6 9.8 Z M0.6 11.6 Q6.8 15.2 13 11.6 V12.4 Q6.8 16 0.6 12.4 Z"/><path d="M0.5 0.5 L14.6 14.8" stroke="#181818" stroke-width="2.4"/><path d="M0.5 0.5 L14.6 14.8" stroke="#b0b0b0" stroke-width="1.1"/></svg>
<svg style="left:1198px;top:741.5px" width="15" height="15" viewBox="0 0 15 15" fill="none" stroke="#a8a8a8" stroke-width="1.3"><path d="M2 4.2 A6.4 6.4 0 0 1 12.4 3.2 M13 10.8 A6.4 6.4 0 0 1 2.6 11.8"/><path d="M13.6 0.8 V4.8 H9.6 Z M1.4 14.2 V10.2 H5.4 Z" fill="#a8a8a8" stroke="none"/><circle cx="7.5" cy="6.4" r="2.3" fill="#a8a8a8" stroke="none"/><path d="M6.2 9 H8.8 L7.5 11.2 Z" fill="#a8a8a8" stroke="none"/><path d="M1 1 L14.2 14.2" stroke="#161616" stroke-width="2"/><path d="M1 1 L14.2 14.2" stroke-width="1"/></svg>
<svg style="left:1225.5px;top:741px" width="16" height="16" viewBox="0 0 16 16" fill="none" stroke="#9c9c9c"><circle cx="7.8" cy="7.8" r="7" stroke-width="1.2"/><path d="M4.8 8 L7 10 L10.8 5.8" stroke="#c8c8c8" stroke-width="1.5"/></svg>
</body></html>
